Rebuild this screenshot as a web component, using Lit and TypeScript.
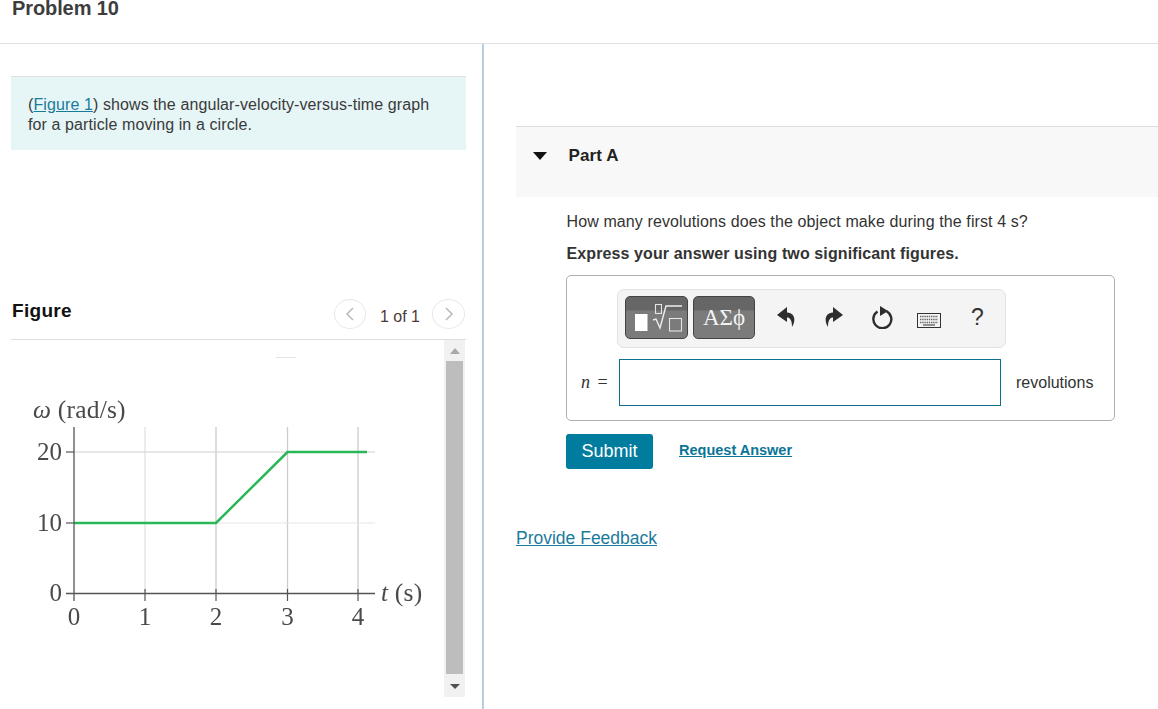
import { customElement } from "lit/decorators.js";
import { css, html, LitElement, svg } from "lit";

const xTicks = [74, 145, 216, 287.5, 358];
const yTicks = [
  { y: 452, label: "20", grid: "#cfcfcf" },
  { y: 523, label: "10", grid: "#e6e6e6" },
];

@customElement("app-root")
export class AppRoot extends LitElement {
  graph() {
    return svg`<svg class="graph" width="433" height="369" viewBox="0 0 433 369">
      <g transform="translate(-11 -340)">
        ${xTicks.slice(1).map(
          (x, i) =>
            svg`<line x1=${x} y1="427" x2=${x} y2="593" stroke=${i === 0 ? "#e2e2e2" : "#cccccc"} stroke-width="1.3"/>`,
        )}
        ${yTicks.map(
          (t) =>
            svg`<line x1="74" y1=${t.y} x2="375" y2=${t.y} stroke=${t.grid} stroke-width="1.2"/>
            <line x1="66" y1=${t.y} x2="74" y2=${t.y} stroke="#555" stroke-width="1.2"/>
            <text x="62" y=${t.y + 8} text-anchor="end" class="num">${t.label}</text>`,
        )}
        <polyline points="74,523 216,523 287.5,452 367,452" fill="none" stroke="#2ab757" stroke-width="2.5"/>
        <line x1="74" y1="427" x2="74" y2="601" stroke="#555" stroke-width="1.3"/>
        <line x1="66" y1="593.5" x2="375" y2="593.5" stroke="#555" stroke-width="1.3"/>
        ${xTicks
          .slice(1)
          .map(
            (x) =>
              svg`<line x1=${x} y1="589" x2=${x} y2="601" stroke="#555" stroke-width="1.2"/>`,
          )}
        ${xTicks.map(
          (x, i) =>
            svg`<text x=${x} y="625" text-anchor="middle" class="num">${i}</text>`,
        )}
        <text x="62" y="601" text-anchor="end" class="num">0</text>
        <text x="33" y="418" class="label"><tspan font-style="italic">ω</tspan> (rad/s)</text>
        <text x="381" y="601" class="label"><tspan font-style="italic">t</tspan> (s)</text>
      </g>
    </svg>`;
  }

  toolbar() {
    return html`<div class="toolbar">
      <div class="tool-btn templates">
        <svg width="61" height="41" viewBox="0 0 61 41">
          <rect x="9" y="17" width="12.5" height="17" fill="#fff"/>
          <rect x="29.5" y="7.5" width="6" height="9" fill="none" stroke="#e4e4e4" stroke-width="1.1"/>
          <path d="M27 23 l3 -1 l4 9 l6 -22 h16" fill="none" stroke="#eee" stroke-width="1.4"/>
          <rect x="43.5" y="21.5" width="12" height="12.5" fill="none" stroke="#e4e4e4" stroke-width="1.1"/>
        </svg>
      </div>
      <div class="tool-btn symbols">ΑΣϕ</div>
      <svg class="icon undo" width="18" height="21" viewBox="0 0 18 21">
        <path d="M10 0 L0 8 L10 15 V10.5 C13 10.5 15 13 15 20 C18.5 15 19 6 10 5.5 Z" fill="#2d2d2d"/>
      </svg>
      <svg class="icon redo" width="18" height="21" viewBox="0 0 18 21">
        <path d="M8 0 L18 8 L8 15 V10.5 C5 10.5 3 13 3 20 C-0.5 15 -1 6 8 5.5 Z" fill="#2d2d2d"/>
      </svg>
      <svg class="icon reset" width="22" height="23" viewBox="0 0 22 23">
        <path d="M6.5 5.6 A9 9 0 1 0 15.5 5.2" fill="none" stroke="#2d2d2d" stroke-width="2.4"/>
        <path d="M9 0 L17 5 L9 10 Z" fill="#2d2d2d"/>
      </svg>
      <svg class="icon keys" width="24" height="15" viewBox="0 0 24 15">
        <rect x="0.5" y="0.5" width="23" height="14" fill="#f4f4f4" stroke="#333"/>
        <path d="M3 3.5 H21 M3 6.5 H21 M3 9.5 H21" stroke="#666" stroke-width="1.6" stroke-dasharray="1.4 0.8"/>
        <path d="M6 12 H18" stroke="#666" stroke-width="1.4"/>
      </svg>
      <span class="help">?</span>
    </div>`;
  }

  render() {
    return html`<header><h1>Problem 10</h1></header>
      <main>
        <section class="left">
          <div class="intro">
            (<a href="#">Figure 1</a>) shows the angular-velocity-versus-time
            graph for a particle moving in a circle.
          </div>
          <div class="figure-head">
            <h2>Figure</h2>
            <div class="pager">
              <span class="round">
                <svg width="10" height="14" viewBox="0 0 10 14"><path d="M8 1 L2 7 L8 13" fill="none" stroke="#bbb" stroke-width="1.6"/></svg>
              </span>
              <span class="count">1 of 1</span>
              <span class="round next">
                <svg width="10" height="14" viewBox="0 0 10 14"><path d="M2 1 L8 7 L2 13" fill="none" stroke="#bbb" stroke-width="1.6"/></svg>
              </span>
            </div>
          </div>
          <div class="viewer">
            <div class="canvas">${this.graph()}</div>
            <div class="scrollbar">
              <span class="arrow up"></span>
              <span class="thumb"></span>
              <span class="arrow down"></span>
            </div>
          </div>
        </section>
        <section class="right">
          <div class="part-head">
            <span class="caret"></span>
            <span class="part-title">Part A</span>
          </div>
          <div class="part-body">
            <p class="question">How many revolutions does the object make during the first 4 s?</p>
            <p class="hint">Express your answer using two significant figures.</p>
            <div class="answer-box">
              ${this.toolbar()}
              <div class="answer-row">
                <span class="var"><i>n</i> =</span>
                <div class="input"></div>
                <span class="unit">revolutions</span>
              </div>
            </div>
            <div class="actions">
              <button>Submit</button>
              <a class="request" href="#">Request Answer</a>
            </div>
          </div>
          <a class="feedback" href="#">Provide Feedback</a>
        </section>
      </main>`;
  }

  static styles = css`
    :host {
      display: block;
      width: 1158px;
      height: 709px;
      overflow: hidden;
      background: #fff;
      color: #333;
      font-family: "Liberation Sans", Arial, sans-serif;
      font-size: 16px;
    }

    header {
      height: 43px;
      border-bottom: 1px solid #e0e0e0;
      padding-left: 12px;
      overflow: hidden;
    }

    h1 {
      margin: -2px 0 0;
      font-size: 20px;
      line-height: 20px;
      font-weight: bold;
      letter-spacing: -0.1px;
      color: #3d3d3d;
    }

    main {
      display: flex;
      height: 665px;
    }

    .left {
      width: 484px;
      flex: none;
      box-sizing: border-box;
      padding: 32px 16px 0 11px;
      border-right: 2px solid #b9cde0;
    }

    .intro {
      height: 74px;
      box-sizing: border-box;
      padding: 18px 30px 0 17px;
      background: #e6f5f6;
      border-top: 1px solid #dde3e5;
      line-height: 20px;
      letter-spacing: 0.1px;
      color: #3a3a3a;
    }

    a {
      color: #1a7a9c;
    }

    .figure-head {
      display: flex;
      justify-content: space-between;
      align-items: flex-start;
      margin-top: 149px;
      height: 41px;
      box-sizing: border-box;
      border-bottom: 1px solid #ddd;
    }

    h2 {
      margin: 0 0 0 1px;
      font-size: 19px;
      line-height: 24px;
      letter-spacing: 0.3px;
      color: #111;
    }

    .pager {
      display: flex;
      align-items: center;
      gap: 14px;
      margin-right: 1px;
    }

    .round {
      width: 32px;
      height: 30px;
      box-sizing: border-box;
      border: 1px solid #e8e8e8;
      border-radius: 50%;
      display: flex;
      align-items: center;
      justify-content: center;
    }

    .round.next {
      width: 33px;
      margin-left: -2px;
    }

    .count {
      margin-top: 5px;
      font-size: 16px;
      color: #4a3a3a;
    }

    .viewer {
      display: flex;
      height: 369px;
    }

    .canvas {
      width: 433px;
      position: relative;
      overflow: hidden;
    }

    .canvas::before {
      content: "";
      position: absolute;
      left: 265px;
      top: 17px;
      width: 20px;
      height: 1px;
      background: #e4e4e4;
    }

    .graph {
      display: block;
      filter: blur(0.35px);
    }

    .num,
    .label {
      font-family: "Liberation Serif", "Times New Roman", serif;
      font-size: 25px;
      fill: #4a4a4a;
    }

    .label {
      font-size: 25.5px;
      letter-spacing: 0.2px;
    }

    .scrollbar {
      width: 21px;
      height: 357px;
      background: #f1f1f1;
      display: flex;
      flex-direction: column;
      align-items: center;
    }

    .arrow {
      flex: none;
      width: 0;
      height: 0;
      border-left: 5px solid transparent;
      border-right: 5px solid transparent;
    }

    .arrow.up {
      margin: 8px 0 7px;
      border-bottom: 6px solid #a8a8a8;
    }

    .arrow.down {
      margin: 10px 0 8px;
      border-top: 5px solid #505050;
    }

    .thumb {
      flex: 1;
      width: 17px;
      background: #bdbdbd;
    }

    .right {
      flex: 1;
      padding: 82px 0 0 32px;
    }

    .part-head {
      height: 71px;
      box-sizing: border-box;
      display: flex;
      align-items: flex-start;
      padding: 19px 0 0 17px;
      background: #f8f8f8;
      border-top: 1px solid #ddd;
    }

    .caret {
      width: 0;
      height: 0;
      margin-top: 6px;
      border-left: 7.5px solid transparent;
      border-right: 7.5px solid transparent;
      border-top: 8px solid #111;
    }

    .part-title {
      margin-left: 21.5px;
      font-size: 17px;
      font-weight: bold;
      line-height: 20px;
      letter-spacing: 0.1px;
      color: #222;
    }

    .part-body {
      padding: 15px 43px 0 50px;
    }

    p {
      margin: 0 0 0 0.5px;
      line-height: 20px;
      letter-spacing: 0.11px;
    }

    .hint {
      margin-top: 12px;
      font-weight: bold;
    }

    .answer-box {
      margin-top: 11px;
      height: 146px;
      box-sizing: border-box;
      border: 1px solid #b0b0b0;
      border-radius: 5px;
      padding: 13px 19px 0 14px;
    }

    .toolbar {
      margin-left: 36px;
      width: 389px;
      height: 59px;
      box-sizing: border-box;
      display: flex;
      align-items: center;
      padding: 0 7px 2px;
      background: #f4f4f4;
      border: 1px solid #e2e2e2;
      border-radius: 7px;
    }

    .tool-btn {
      height: 43px;
      box-sizing: border-box;
      border: 1px solid #444;
      border-radius: 5px;
      background: linear-gradient(#666 0 13px, #7b7b7b 14px);
      color: #f2f2f2;
      display: flex;
      align-items: center;
      justify-content: center;
      font-family: "Liberation Serif", serif;
      font-size: 23px;
    }

    .templates {
      width: 63px;
    }

    .templates svg {
      flex: none;
    }

    .symbols {
      width: 62px;
      margin-left: 5px;
    }

    .icon {
      flex: none;
      display: block;
    }

    .undo {
      margin-left: 22px;
    }

    .redo {
      margin-left: 30px;
    }

    .reset {
      margin-left: 28px;
    }

    .keys {
      margin-left: 24px;
      margin-top: 5px;
    }

    .help {
      margin-left: 30px;
      font-size: 23px;
      color: #333;
    }

    .answer-row {
      display: flex;
      align-items: center;
      margin-top: 11px;
    }

    .var {
      width: 38px;
      font-family: "Liberation Serif", serif;
      font-size: 18px;
      word-spacing: 3px;
      color: #333;
    }

    .input {
      width: 382px;
      height: 47px;
      box-sizing: border-box;
      border: 1px solid #0f6f8f;
    }

    .unit {
      margin-left: 15px;
    }

    .actions {
      display: flex;
      align-items: center;
      margin-top: 13px;
    }

    button {
      width: 87px;
      height: 35px;
      padding: 0;
      border: 0;
      border-radius: 3px;
      background: #007c9e;
      color: #fff;
      font: 18px "Liberation Sans", Arial, sans-serif;
    }

    .request {
      margin-left: 26px;
      font-weight: bold;
      font-size: 14.5px;
      color: #0b7596;
      position: relative;
      top: -2px;
    }

    .feedback {
      display: inline-block;
      margin-top: 59px;
      font-size: 17.5px;
    }
  `;
}
